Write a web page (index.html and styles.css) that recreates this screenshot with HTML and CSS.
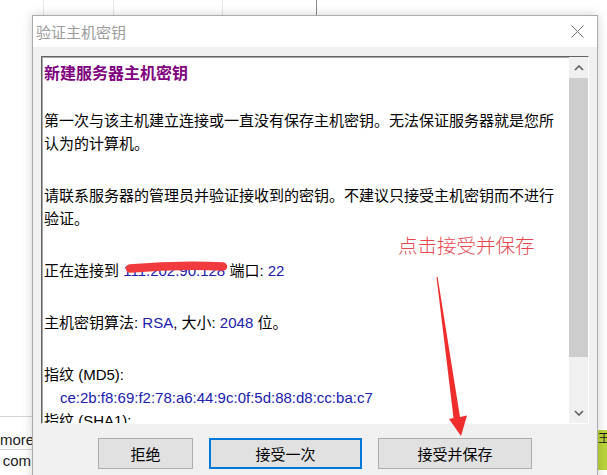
FILE: index.html
```html
<!DOCTYPE html>
<html lang="zh-CN">
<head>
<meta charset="utf-8">
<title>验证主机密钥</title>
<link rel="stylesheet" href="styles.css">
</head>
<body>
<div class="desktop">
  <div class="bg">
    <div class="col c1">
      <div class="cell cell-a">more</div>
      <div class="cell cell-b">com</div>
    </div>
    <div class="col c2"></div>
    <div class="col c3"></div>
    <div class="col c4"></div>
    <div class="col c5"><div class="green">王不</div></div>
  </div>

  <div class="dialog">
    <div class="titlebar">
      <span class="title">验证主机密钥</span>
      <svg class="close" width="13" height="13" viewBox="0 0 13 13"><path d="M0.5 0.5 L12.5 12.5 M12.5 0.5 L0.5 12.5" stroke="#707070" stroke-width="1" fill="none"/></svg>
    </div>
    <div class="dbody">
      <div class="content">
        <div class="text">
          <p class="head">新建服务器主机密钥</p>
          <p>第一次与该主机建立连接或一直没有保存主机密钥。无法保证服务器就是您所认为的计算机。</p>
          <p>请联系服务器的管理员并验证接收到的密钥。不建议只接受主机密钥而不进行验证。</p>
          <p>正在连接到 <span class="val">111.202.90.128</span> 端口: <span class="val">22</span></p>
          <p>主机密钥算法: <span class="val">RSA</span>, 大小: <span class="val">2048</span> 位。</p>
          <p>指纹 (MD5):<span class="fp val">ce:2b:f8:69:f2:78:a6:44:9c:0f:5d:88:d8:cc:ba:c7</span>指纹 (SHA1):</p>
        </div>
        <div class="scrollbar">
          <div class="sb-btn"><svg width="10" height="6" viewBox="0 0 10 6"><polyline points="1,5 5,1 9,5" fill="none" stroke="#606060" stroke-width="1.6"/></svg></div>
          <div class="thumb"></div>
          <div class="track"></div>
          <div class="sb-btn"><svg width="10" height="6" viewBox="0 0 10 6"><polyline points="1,1 5,5 9,1" fill="none" stroke="#606060" stroke-width="1.6"/></svg></div>
        </div>
      </div>
      <div class="buttons">
        <button class="btn w1">拒绝</button>
        <button class="btn w2 focus">接受一次</button>
        <button class="btn w3">接受并保存</button>
      </div>
    </div>
  </div>

  <div class="note">点击接受并保存</div>
  <svg class="marks" width="607" height="475" viewBox="0 0 607 475">
    <path d="M130 268.5 Q 177 264.5 223 266.5" stroke="#f03a3e" stroke-width="8.5" stroke-linecap="round" fill="none"/>
    <polygon points="436.5,277 437.6,277 460,417 467,415.5 461,436 449,419 453.5,418" fill="#ef2d2d"/>
  </svg>
</div>
</body>
</html>
```

FILE: styles.css
```css
* { box-sizing: border-box; }
html, body { margin: 0; padding: 0; }
body {
  width: 607px;
  height: 475px;
  overflow: hidden;
  background: #fff;
  font-family: "Liberation Sans", "Noto Sans CJK SC", sans-serif;
}
.desktop {
  position: relative;
  width: 607px;
  height: 475px;
  overflow: hidden;
}

/* background application */
.bg { display: flex; height: 475px; }
.col { height: 100%; border-right: 1px solid #e6e6e6; }
.c1 {
  width: 44px;
  display: flex;
  flex-direction: column;
  justify-content: flex-end;
}
.c2 { width: 70px; }
.c3 { width: 109px; }
.c4 { width: 94px; border-right-color: #8a8a8a; }
.c5 {
  flex: 1;
  border-right: none;
  display: flex;
  flex-direction: column;
  justify-content: flex-end;
  align-items: flex-end;
}
.cell {
  border-top: 1px solid #d4d4d4;
  font-size: 15px;
  line-height: 20px;
  color: #222;
  text-align: right;
  padding-right: 12px;
  white-space: nowrap;
}
.cell-a { height: 33px; padding-top: 13px; }
.cell-b { height: 26px; padding-top: 1px; }
.green {
  width: 10px;
  height: 40px;
  margin-bottom: 5px;
  background: #b9d53c;
  overflow: hidden;
  white-space: nowrap;
  font-family: "Noto Sans CJK SC", sans-serif;
  font-size: 12px;
  line-height: 12px;
  padding-top: 2px;
  padding-left: 1px;
  color: #111;
}

/* dialog window */
.dialog {
  position: absolute;
  left: 32px;
  top: 15px;
  width: 566px;
  height: 470px;
  background: #f0f0f0;
  border: 1px solid #ababab;
  box-shadow: 0 0 10px rgba(0, 0, 0, 0.18);
  display: flex;
  flex-direction: column;
}
.titlebar {
  height: 31px;
  flex: none;
  background: #fff;
  display: flex;
  align-items: center;
  justify-content: space-between;
  padding: 0 13px 0 3px;
}
.title {
  font-family: "Noto Sans CJK SC", sans-serif;
  font-size: 15px;
  color: #9c9c9c;
  line-height: 20px;
}
.close { display: block; }

.dbody {
  flex: 1;
  padding: 9px 8px 0;
  display: flex;
  flex-direction: column;
}
.content {
  height: 368px;
  flex: none;
  display: flex;
  background: #fff;
  border: 1px solid #fff;
  border-top-color: #646464;
  border-left-color: #646464;
  box-shadow: inset 1px 1px 0 #a8a8a8;
  overflow: hidden;
}
.text {
  flex: 1;
  padding: 4px 4px 0 2px;
  overflow: hidden;
  font-size: 15px;
  line-height: 23px;
  color: #000;
}
.text p { margin: 0 0 29px; }
.text p.head {
  font-family: "Noto Sans CJK SC", sans-serif;
  font-size: 16px;
  font-weight: bold;
  color: #800080;
  margin-bottom: 25px;
}
.val { color: #2020b0; }
.fp { display: block; padding-left: 16px; }

.scrollbar {
  width: 19px;
  flex: none;
  background: #f0f0f0;
  display: flex;
  flex-direction: column;
}
.sb-btn {
  height: 21px;
  flex: none;
  display: flex;
  align-items: center;
  justify-content: center;
}
.sb-btn:last-child { height: 20px; }
.sb-btn svg { display: block; }
.thumb { height: 279px; flex: none; background: #cdcdcd; }
.track { flex: 1; }

.buttons {
  display: flex;
  justify-content: center;
  gap: 16px;
  margin-top: 14px;
}
.btn {
  height: 31px;
  padding: 0;
  background: #e1e1e1;
  border: 1px solid #adadad;
  font-family: "Noto Sans CJK SC", sans-serif;
  font-size: 15px;
  color: #000;
}
.w1 { width: 95px; }
.w2 { width: 153px; }
.w3 { width: 154px; }
.btn.focus { border: 2px solid #0078d7; }

/* annotations drawn over the screenshot */
.note {
  position: absolute;
  left: 398px;
  top: 235px;
  font-family: "Noto Sans CJK SC", sans-serif;
  font-weight: 300;
  font-size: 19.5px;
  line-height: 20px;
  color: #e8464f;
  white-space: nowrap;
}
.marks {
  position: absolute;
  left: 0;
  top: 0;
  pointer-events: none;
}
```
